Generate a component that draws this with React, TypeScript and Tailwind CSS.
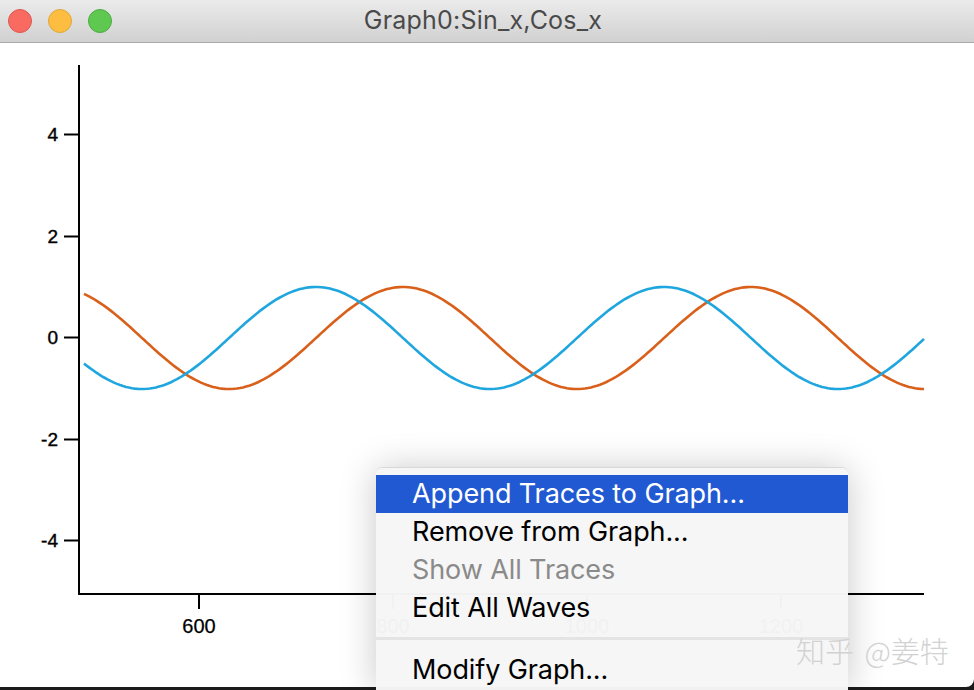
const wave = (fn: (x: number) => number, from: number, to: number) => {
  const points: string[] = [];
  for (let x = from; x <= to; x += 3) points.push(`${x},${fn(x).toFixed(1)}`);
  return "M" + points.join("L");
};

const sinY = (x: number) => 338 - 51 * Math.sin((2 * Math.PI * (x - 229)) / 348);
const cosY = (x: number) => 338 - 51 * Math.cos((2 * Math.PI * (x - 403)) / 348);

const yTicks = [
  { y: 134.5, label: "4" },
  { y: 236.5, label: "2" },
  { y: 337.5, label: "0" },
  { y: 439.5, label: "-2" },
  { y: 540.5, label: "-4" },
];
const xTicks = [
  { x: 199, label: "600" },
  { x: 393, label: "800" },
  { x: 587, label: "1000" },
  { x: 781, label: "1200" },
];

function Graph() {
  return (
    <svg width="974" height="644" viewBox="0 43 974 644" className="block">
      <path d="M79 65V594H924" fill="none" stroke="#000" strokeWidth="2" />
      {yTicks.map((t) => (
        <g key={t.label}>
          <path d={`M64 ${t.y}H79`} stroke="#000" strokeWidth="2" />
          <text x="58" y={t.y + 6.5} textAnchor="end" fontSize="19" stroke="#000" strokeWidth="0.4" fill="#000" fontFamily="'Liberation Sans', sans-serif">
            {t.label}
          </text>
        </g>
      ))}
      {xTicks.map((t) => (
        <g key={t.label}>
          <path d={`M${t.x} 594V609`} stroke="#000" strokeWidth="2" />
          <text x={t.x} y="632.5" textAnchor="middle" fontSize="20" stroke="#000" strokeWidth="0.25" fill="#000" fontFamily="'Liberation Sans', sans-serif">
            {t.label}
          </text>
        </g>
      ))}
      <path d={wave(cosY, 84, 924)} fill="none" stroke="#d9601a" strokeWidth="2.6" />
      <path d={wave(sinY, 84, 925)} fill="none" stroke="#1fa6de" strokeWidth="2.6" />
    </svg>
  );
}

function MenuItem({ label, active, disabled }: { label: string; active?: boolean; disabled?: boolean }) {
  return (
    <div
      className={`h-[38px] pl-[36px] text-[27px] leading-[38px] tracking-[-0.1px] whitespace-nowrap ${
        active ? "bg-[#2159d3] text-white" : disabled ? "text-[#8a8a8a]" : "text-black"
      }`}
    >
      {label}
    </div>
  );
}

export default function App() {
  return (
    <div className="relative h-[690px] w-[974px] overflow-hidden bg-[#1b1b1b] font-['Inter','Liberation_Sans',sans-serif]">
      <div className="h-[687px] overflow-hidden rounded-br-[8px] bg-white">
        <div className="relative flex h-[43px] items-center justify-center border-b border-[#a9a9a9] bg-gradient-to-b from-[#ebebeb] to-[#d1d1d1] pr-[8px]">
          <div className="absolute left-[8px] top-[9px] flex gap-[16px]">
            <span className="h-[24px] w-[24px] rounded-full border border-[#dc5a50] bg-[#f96b61]" />
            <span className="h-[24px] w-[24px] rounded-full border border-[#dea83c] bg-[#fdbd41]" />
            <span className="h-[24px] w-[24px] rounded-full border border-[#4eac44] bg-[#5ec850]" />
          </div>
          <span className="text-[25px] tracking-[0.2px] text-[#4a4a4a]">Graph0:Sin_x,Cos_x</span>
        </div>
        <Graph />
      </div>

      <div className="absolute left-[376px] top-[467px] h-[223px] w-[472px] rounded-t-[6px] border-t border-[#d8d8d8] bg-[#f6f6f6]/[0.98] pt-[7px] shadow-[0_2px_36px_rgba(0,0,0,0.22)]">
        <MenuItem label="Append Traces to Graph..." active />
        <MenuItem label="Remove from Graph..." />
        <MenuItem label="Show All Traces" disabled />
        <MenuItem label="Edit All Waves" />
        <div className="mt-[10px] mb-[11px] h-[3px] bg-[#e4e4e4]" />
        <MenuItem label="Modify Graph..." />
      </div>

      <div className="absolute left-[796px] top-[631px] font-['Noto_Sans_CJK_SC',sans-serif] text-[29px] leading-[38px] font-light [word-spacing:4px] whitespace-nowrap text-[#d2d2d2]">
        知乎 @姜特
      </div>
    </div>
  );
}
